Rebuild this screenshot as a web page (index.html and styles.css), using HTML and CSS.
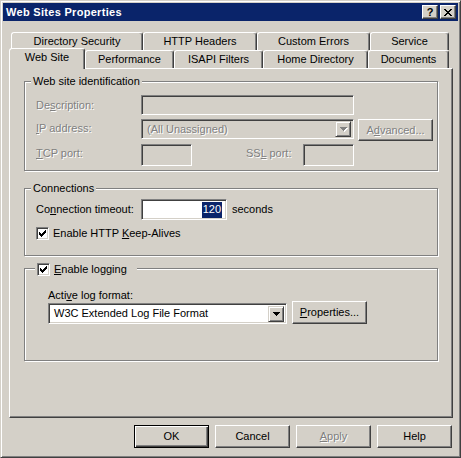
FILE: index.html
```html
<!DOCTYPE html>
<html>
<head>
<meta charset="utf-8">
<title>Web Sites Properties</title>
<link rel="stylesheet" href="styles.css">
</head>
<body>
<div class="window">
  <div class="titlebar">
    <span class="title">Web Sites Properties</span>
    <span class="cap-btn cap-help">?</span>
    <span class="cap-btn cap-close"><svg width="8" height="7" viewBox="0 0 8 7"><path d="M0 0h2v1H0zM6 0h2v1H6zM1 1h2v1H1zM5 1h2v1H5zM2 2h4v1H2zM3 3h2v1H3zM2 4h4v1H2zM1 5h2v1H1zM5 5h2v1H5zM0 6h2v1H0zM6 6h2v1H6z"/></svg></span>
  </div>

  <div class="tabs">
    <div class="tabrow back">
      <div class="tab t-dirsec">Directory Security</div>
      <div class="tab t-http">HTTP Headers</div>
      <div class="tab t-errors">Custom Errors</div>
      <div class="tab t-service">Service</div>
    </div>
    <div class="tabrow front">
      <div class="tab selected t-web">Web Site</div>
      <div class="tab t-perf">Performance</div>
      <div class="tab t-isapi">ISAPI Filters</div>
      <div class="tab t-home">Home Directory</div>
      <div class="tab t-docs">Documents</div>
    </div>
  </div>

  <div class="panel">
    <div class="group g-ident">
      <div class="group-title">Web site identification</div>
      <div class="row r-desc">
        <span class="lbl dis">De<u>s</u>cription:</span>
        <span class="field dis f-desc"></span>
      </div>
      <div class="row r-ip">
        <span class="lbl dis"><u>I</u>P address:</span>
        <span class="field dis combo f-ip">
          <span class="combo-text dis">(All Unassigned)</span>
          <span class="drop dis"><svg width="7" height="4" viewBox="0 0 7 4"><path d="M0 0h7v1H0zM1 1h5v1H1zM2 2h3v1H2zM3 3h1v1H3z"/></svg></span>
        </span>
        <span class="btn dis b-adv">A<u>d</u>vanced...</span>
      </div>
      <div class="row r-port">
        <span class="lbl dis l-tcp"><u>T</u>CP port:</span>
        <span class="field dis f-port"></span>
        <span class="dis l-ssl">SS<u>L</u> port:</span>
        <span class="field dis f-port"></span>
      </div>
    </div>

    <div class="group g-conn">
      <div class="group-title">Connections</div>
      <div class="row r-timeout">
        <span class="lbl">Co<u>n</u>nection timeout:</span>
        <span class="field f-timeout"><span class="sel">120</span></span>
        <span class="unit">seconds</span>
      </div>
      <div class="row r-keep">
        <span class="chk"><svg width="7" height="7" viewBox="0 0 7 7"><path d="M0 2h1v3H0zM1 3h1v3H1zM2 4h1v3H2zM3 3h1v3H3zM4 2h1v3H4zM5 1h1v3H5zM6 0h1v3H6z"/></svg></span>
        <span class="chk-label">Enable HTTP <u>K</u>eep-Alives</span>
      </div>
    </div>

    <div class="group g-log">
      <div class="group-title chk-title">
        <span class="chk"><svg width="7" height="7" viewBox="0 0 7 7"><path d="M0 2h1v3H0zM1 3h1v3H1zM2 4h1v3H2zM3 3h1v3H3zM4 2h1v3H4zM5 1h1v3H5zM6 0h1v3H6z"/></svg></span>
        <span class="chk-label"><u>E</u>nable logging</span>
      </div>
      <div class="log-body">
        <div class="log-label">Acti<u>v</u>e log format:</div>
        <div class="row r-format">
          <span class="field combo f-format">
            <span class="combo-text">W3C Extended Log File Format</span>
            <span class="drop"><svg width="7" height="4" viewBox="0 0 7 4"><path d="M0 0h7v1H0zM1 1h5v1H1zM2 2h3v1H2zM3 3h1v1H3z"/></svg></span>
          </span>
          <span class="btn b-props"><u>P</u>roperties...</span>
        </div>
      </div>
    </div>
  </div>

  <div class="buttons">
    <span class="btn default">OK</span>
    <span class="btn">Cancel</span>
    <span class="btn dis"><u>A</u>pply</span>
    <span class="btn">Help</span>
  </div>
</div>
</body>
</html>
```

FILE: styles.css
```css
* {
  box-sizing: border-box;
}

html,
body {
  margin: 0;
  padding: 0;
}

body {
  background: #d4d0c8;
  font-family: "Liberation Sans", Arial, sans-serif;
  font-size: 11px;
  line-height: 13px;
  color: #000;
}

u {
  text-decoration: underline;
  text-underline-offset: 1px;
}

.window {
  width: 461px;
  height: 458px;
  padding: 2px;
  background: #d4d0c8;
  border: 1px solid;
  border-color: #d4d0c8 #404040 #404040 #d4d0c8;
  box-shadow: inset 1px 1px #fff, inset -1px -1px #808080;
}

/* title bar */
.titlebar {
  height: 18px;
  background: #0a246a;
  display: flex;
  align-items: center;
  padding: 0 2px 0 3px;
}

.title {
  flex: 1;
  color: #fff;
  font-weight: bold;
  letter-spacing: 0.3px;
}

.cap-btn {
  width: 16px;
  height: 14px;
  background: #d4d0c8;
  border: 1px solid;
  border-color: #fff #404040 #404040 #fff;
  box-shadow: inset -1px -1px #808080;
  display: flex;
  align-items: center;
  justify-content: center;
}

.cap-help {
  margin-right: 2px;
  font-weight: bold;
  font-size: 11px;
  line-height: 12px;
}

.cap-close svg {
  display: block;
}

/* tabs */
.tabs {
  margin-top: 11px;
}

.tabrow {
  display: flex;
}

.tabrow.back {
  margin-left: 8px;
  height: 18px;
}

.tabrow.front {
  margin-left: 6px;
  margin-top: -2px;
  height: 20px;
  align-items: flex-end;
}

.tab {
  height: 18px;
  background: #d4d0c8;
  border: 1px solid;
  border-bottom: none;
  border-color: #fff #404040 transparent #fff;
  border-radius: 3px 3px 0 0;
  box-shadow: inset -1px 0 #808080;
  text-align: center;
  line-height: 16px;
  white-space: nowrap;
}

.tab.selected {
  height: 21px;
  margin-bottom: -1px;
  position: relative;
  z-index: 1;
}

.t-dirsec { width: 132px; }
.t-http { width: 114px; }
.t-errors { width: 113px; }
.t-service { width: 79px; }

.t-web { width: 76px; }
.t-perf { width: 89px; }
.t-isapi { width: 89px; }
.t-home { width: 105px; }
.t-docs { width: 81px; }

/* panel */
.panel {
  margin-left: 6px;
  width: 444px;
  height: 350px;
  padding-left: 14px;
  border: 1px solid;
  border-color: #fff #404040 #404040 #fff;
  box-shadow: inset -1px -1px #808080;
}

.group {
  width: 414px;
  border: 1px solid #808080;
  box-shadow: 1px 1px #fff, inset 1px 1px #fff;
  padding-left: 11px;
}

.group-title {
  width: fit-content;
  background: #d4d0c8;
  padding: 0 2px;
  margin: -7px 0 0 -5px;
  height: 13px;
}

.g-ident {
  margin-top: 12px;
  height: 90px;
}

.g-conn {
  margin-top: 17px;
  height: 68px;
}

.g-log {
  margin-top: 12px;
  height: 93px;
}

.row {
  display: flex;
  align-items: center;
}

.lbl {
  width: 105px;
  white-space: nowrap;
}

.dis {
  color: #808080;
  text-shadow: 1px 1px 0 #fff;
}

.field {
  display: flex;
  align-items: center;
  height: 20px;
  background: #fff;
  border: 1px solid;
  border-color: #808080 #fff #fff #808080;
  box-shadow: inset 1px 1px #404040, inset -1px -1px #d4d0c8;
}

.field.dis {
  background: #d4d0c8;
}

.r-desc {
  margin-top: 7px;
}

.f-desc {
  width: 213px;
}

.r-ip {
  margin-top: 4px;
  align-items: flex-start;
}

.r-ip .lbl {
  margin-top: 3px;
}

.combo {
  padding: 2px;
}

.combo-text {
  flex: 1;
  padding-left: 3px;
  white-space: nowrap;
}

.f-ip {
  width: 213px;
}

.drop {
  width: 16px;
  height: 16px;
  background: #d4d0c8;
  border: 1px solid;
  border-color: #d4d0c8 #404040 #404040 #d4d0c8;
  box-shadow: inset 1px 1px #fff, inset -1px -1px #808080;
  display: flex;
  align-items: center;
  justify-content: center;
}

.drop svg {
  display: block;
  fill: #000;
}

.drop.dis svg {
  fill: #808080;
  filter: drop-shadow(1px 1px 0 #fff);
}

.btn {
  width: 75px;
  height: 23px;
  background: #d4d0c8;
  border: 1px solid;
  border-color: #fff #404040 #404040 #fff;
  box-shadow: inset -1px -1px #808080;
  display: flex;
  align-items: center;
  justify-content: center;
  white-space: nowrap;
}

.b-adv {
  margin-left: 4px;
  height: 22px;
}

.r-port {
  margin-top: 3px;
  align-items: flex-start;
}

.r-port .lbl,
.l-ssl {
  margin-top: 3px;
}

.f-port {
  width: 51px;
  height: 22px;
}

.l-ssl {
  margin-left: 54px;
  width: 57px;
  white-space: nowrap;
}

/* connections */
.r-timeout {
  margin-top: 4px;
}

.f-timeout {
  width: 86px;
  height: 21px;
  justify-content: flex-end;
  padding-right: 4px;
}

.sel {
  background: #0a246a;
  color: #fff;
  padding: 1px 1px 2px;
}

.unit {
  margin-left: 5px;
}

.r-keep {
  margin-top: 7px;
}

.chk {
  width: 13px;
  height: 13px;
  flex: none;
  background: #fff;
  border: 1px solid;
  border-color: #808080 #fff #fff #808080;
  box-shadow: inset 1px 1px #404040, inset -1px -1px #d4d0c8;
  display: flex;
  align-items: center;
  justify-content: center;
}

.chk svg {
  display: block;
  fill: #000;
}

.chk-label {
  margin-left: 4px;
  white-space: nowrap;
}

/* logging */
.chk-title {
  display: flex;
  align-items: center;
  margin: -6px 0 0 -1px;
  padding: 0 10px 0 2px;
}

.log-body {
  padding-left: 12px;
}

.log-label {
  margin-top: 13px;
  height: 13px;
}

.r-format {
  margin-top: -1px;
  align-items: flex-end;
}

.f-format {
  width: 239px;
  height: 21px;
}

.b-props {
  margin-left: 5px;
}

/* bottom buttons */
.buttons {
  display: flex;
  justify-content: flex-end;
  gap: 6px;
  margin-top: 7px;
  padding-right: 6px;
}

.btn.default {
  border-color: #000;
  box-shadow: inset 1px 1px #fff, inset -1px -1px #404040, inset -2px -2px #808080;
}
```
